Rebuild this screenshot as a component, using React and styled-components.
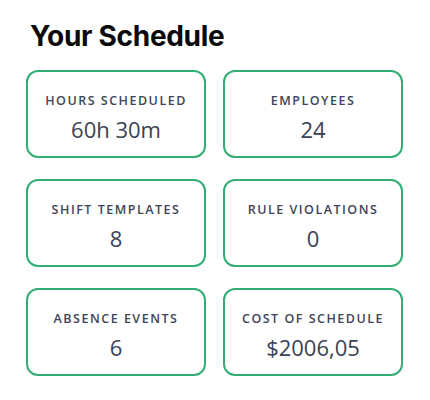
import React from "react";
import styled, { createGlobalStyle } from "styled-components";

const stats = [
  { label: "Hours Scheduled", value: "60h 30m" },
  { label: "Employees", value: "24" },
  { label: "Shift Templates", value: "8" },
  { label: "Rule Violations", value: "0" },
  { label: "Absence Events", value: "6" },
  { label: "Cost of Schedule", value: "$2006,05" },
];

const App = () => {
  return (
    <>
      <GlobalStyle />
      <Container>
        <Header>Your Schedule</Header>
        <Grid>
          {stats.map((s) => (
            <Card key={s.label}>
              <Label>{s.label}</Label>
              <Value>{s.value}</Value>
            </Card>
          ))}
        </Grid>
      </Container>
    </>
  );
};

const GlobalStyle = createGlobalStyle`
  body {
    margin: 0;
    background: #ffffff;
    font-family: "Open Sans", "Noto Sans", sans-serif;
  }
`;

const Container = styled.div`
  padding: 18px 27px 0 26px;
  width: 430px;
  box-sizing: border-box;
`;

const Header = styled.h1`
  margin: 0 0 0 4px;
  font-family: "Inter", sans-serif;
  font-size: 28px;
  font-weight: 700;
  letter-spacing: -0.3px;
  color: #0a0a0a;
  line-height: 36px;
`;

const Grid = styled.div`
  display: grid;
  grid-template-columns: 180px 180px;
  column-gap: 17px;
  row-gap: 21px;
  margin-top: 16px;
`;

const Card = styled.div`
  height: 88px;
  box-sizing: border-box;
  border: 2px solid #32ad74;
  border-radius: 12px;
  display: flex;
  flex-direction: column;
  align-items: center;
  padding-top: 21px;
`;

const Label = styled.div`
  text-transform: uppercase;
  font-size: 12.5px;
  font-weight: 600;
  letter-spacing: 1.5px;
  color: #3d4458;
  line-height: 15px;
  white-space: nowrap;
`;

const Value = styled.div`
  margin-top: 7px;
  font-size: 22px;
  color: #3a4256;
  line-height: 28px;
`;

export default App;
